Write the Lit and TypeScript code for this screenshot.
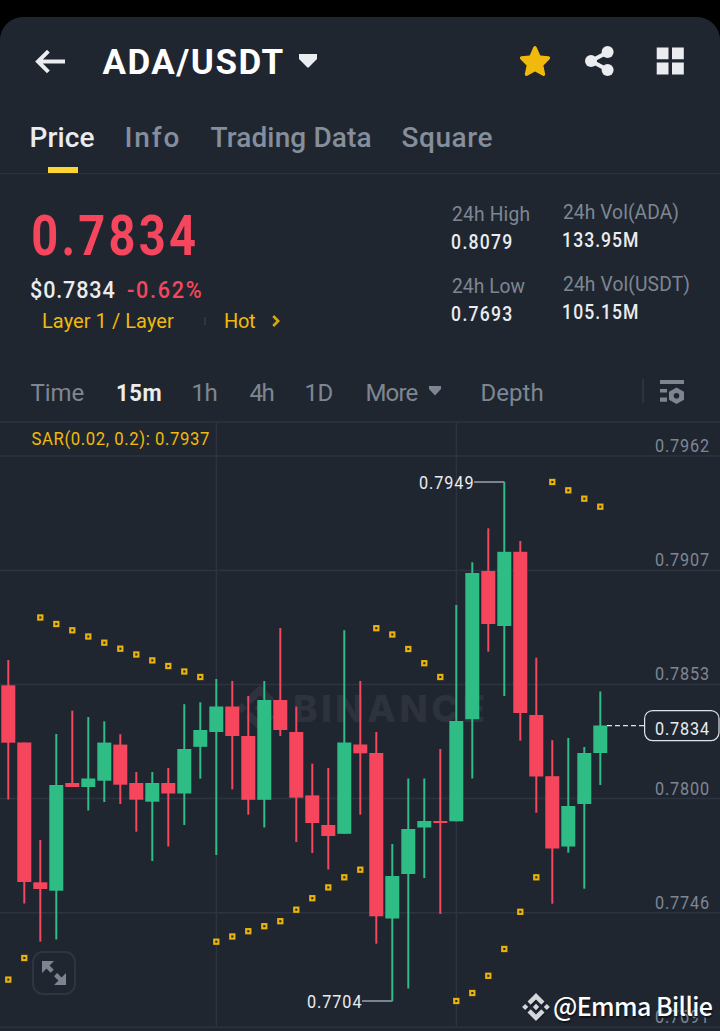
import { LitElement, html, svg, css } from "lit";
import { customElement } from "lit/decorators.js";

type Candle = [up: number, high: number, top: number, bottom: number, low: number];

const STEP = 16;
const FIRST = 8.3;
const cx = (i: number) => FIRST + i * STEP;

const CANDLES: Candle[] = [
  [0, 660, 685.3, 742.7, 799.5], [0, 742.5, 742.5, 882, 903.5], [0, 840, 882.3, 889, 941.7],
  [1, 734, 785, 890.7, 939.5], [0, 710.7, 783, 787, 787], [1, 717, 778.5, 787, 810.5],
  [1, 721.3, 742.6, 780.7, 802], [0, 734.2, 744.6, 784.7, 804], [0, 772, 783, 799.7, 831.7],
  [1, 772, 783, 801.7, 861], [0, 768, 783, 793.5, 846.5], [1, 704.2, 749, 793.5, 825],
  [1, 702.3, 730, 746.8, 778.7], [1, 679, 706.5, 732, 855], [0, 681, 706.5, 736, 789.3],
  [0, 696, 736, 799.8, 814.7], [1, 681, 700, 799.8, 827.5], [0, 628, 700, 730, 736],
  [0, 706.5, 732, 797.7, 842], [0, 763.7, 795.4, 823, 853], [0, 768, 825, 836, 869.5],
  [1, 630.2, 742.5, 833.8, 833.8], [0, 681, 744.5, 753.3, 814.7], [0, 732, 753, 916.3, 943.7],
  [1, 844, 876, 918.5, 1001], [1, 778.5, 829, 874, 988.5], [1, 778.5, 821, 827.5, 878],
  [0, 749, 821, 823, 914], [1, 605, 721, 821.3, 821.3], [1, 562.3, 573, 719.2, 778.5],
  [0, 528.3, 571, 624, 651.7], [1, 482, 551.8, 626, 696], [0, 541, 551.8, 713, 740.7],
  [0, 657.7, 715, 776.5, 812.8], [0, 740.2, 776.2, 848.5, 903.7], [1, 738, 806, 846.5, 852.7],
  [1, 747, 753, 804, 888.7], [1, 691.5, 725.5, 753, 785],
];

const SAR: [start: number, ys: number[]][] = [
  [0, [979.6, 958]],
  [2, [617.5, 624, 630.3, 636.5, 642.7, 648.7, 654.5, 660.4, 666, 671.5, 677]],
  [13, [941.7, 936.5, 931.2, 926.2, 921.2, 909.7, 898.2, 887.4, 877.3, 869.7]],
  [23, [628.2, 634.5, 649, 663.2, 677]],
  [28, [1001, 993, 975.8, 949, 911.8, 877.3]],
  [34, [482, 490.3, 498.7, 506.7]],
];

const AXIS: [string, number][] = [
  ["0.7962", 452], ["0.7907", 566], ["0.7853", 680.3],
  ["0.7800", 794.7], ["0.7746", 909], ["0.7691", 1023.3],
];

const pen = document.createElement("canvas").getContext("2d")!;

// A label whose box hugs its glyphs horizontally and is tracked to the given width.
// A squeeze below 1 condenses the glyphs and leaves more room between them.
const label = (text: string, width: number, size: number, weight: number, cls = "", squeeze = 1) => {
  pen.font = `${weight} ${size}px Roboto`;
  const m = pen.measureText(text);
  const ink = m.actualBoundingBoxLeft + m.actualBoundingBoxRight;
  const full = width / squeeze;
  const tracking = (full - ink) / (text.length - 1);
  return html`<span
    class="label ${cls}"
    style="width:${full}px;margin-right:${width - full}px;transform:${squeeze === 1 ? "none" : `scaleX(${squeeze})`};font-size:${size}px;font-weight:${weight};letter-spacing:${tracking.toFixed(3)}px;text-indent:${m.actualBoundingBoxLeft.toFixed(2)}px"
    >${text}</span
  >`;
};

const figures = (text: string, x: number, y: number, width: number, cls: string, squeeze = 0.9) =>
  svg`<text class=${cls} transform="translate(${x} ${y}) scale(${squeeze} 1)" textLength=${width / squeeze}>${text}</text>`;

@customElement("price-chart")
export class PriceChart extends LitElement {
  static styles = css`
    :host { display: block; }
    svg { display: block; font-family: Roboto, sans-serif; }
    .grid { stroke: #2d333f; stroke-width: 1.5; }
    .frame { stroke: #2a303b; stroke-width: 2; }
    .mark { fill: #2d323d; }
    .mark-text { font: 800 37px Inter, sans-serif; }
    .up { fill: #2ebd85; }
    .down { fill: #f6465d; }
    .sar { fill: #202630; stroke: #e9b30c; stroke-width: 2.1; }
    .yellow { fill: #f0b90b; font-size: 17.8px; }
    .axis { fill: #7f8794; font-size: 18px; }
    .value { fill: #eaecef; font-size: 18px; }
    .leader { stroke: #848e9c; stroke-width: 1.8; }
    .dash { stroke: #dfe2e6; stroke-width: 1.2; stroke-dasharray: 5 3; }
    .tag { fill: #202630; stroke: #dfe2e6; stroke-width: 1.2; }
    .button { fill: #202630; stroke: #2e3541; stroke-width: 2; }
    .glyph { fill: #7c8591; }
    .glyph-line { stroke: #7c8591; stroke-width: 4.4; }
    .author-logo { fill: #d3d6da; }
    .author { fill: #fff; font: 500 25px "Noto Sans CJK SC", sans-serif; text-shadow: 1px 1.5px 1px #10141a; }
    .shade { fill: #10141a; opacity: 0.75; }
  `;

  private logo(x: number, y: number, scale: number, cls: string) {
    return svg`<g class=${cls} transform="translate(${x} ${y}) scale(${scale})">
      <path d="M0-14 8.5-5.5 5.3-2.3 0-7.6-5.3-2.3-8.5-5.5Z"/>
      <path d="M0 14 8.5 5.5 5.3 2.3 0 7.6-5.3 2.3-8.5 5.5Z"/>
      <path d="M0-3.2 3.2 0 0 3.2-3.2 0Z"/>
      <path d="M-10.8-3.1-7.7 0-10.8 3.1-13.9 0Z"/>
      <path d="M10.8-3.1 13.9 0 10.8 3.1 7.7 0Z"/>
    </g>`;
  }

  render() {
    return html`<svg width="720" height="610" viewBox="0 421 720 610">
      <line class="frame" x1="0" x2="720" y1="422" y2="422" />
      ${[456, 570.4, 684.5, 798.6, 912.7].map((y) => svg`<line class="grid" x1="0" x2="720" y1=${y} y2=${y}/>`)}
      <line class="frame" x1="0" x2="720" y1="1027.3" y2="1027.3" />
      ${[216.4, 456.4].map((x) => svg`<line class="grid" x1=${x} x2=${x} y1="423" y2="1027"/>`)}
      ${this.logo(260, 708, 1.68, "mark")}
      <text class="mark mark-text" x="293" y="722" textLength="192">BINANCE</text>
      ${AXIS.map(([t, y]) => figures(t, 655, y, 54, "axis"))}
      ${CANDLES.map(
        ([up, high, top, bottom, low], i) => svg`<g class=${up ? "up" : "down"}>
          <rect x=${cx(i) - 1} y=${high} width="2" height=${low - high}/>
          <rect x=${cx(i) - 7} y=${top} width="14" height=${bottom - top}/>
        </g>`,
      )}
      ${SAR.map(([start, ys]) =>
        ys.map((y, i) => svg`<rect class="sar" x=${cx(start + i) - 2.1} y=${y - 2.1} width="4.2" height="4.2"/>`),
      )}
      ${figures("SAR(0.02, 0.2): 0.7937", 31.5, 445, 178, "yellow", 0.94)}
      ${figures("0.7949", 419, 489, 54.5, "value")}
      <line class="leader" x1="474" x2="504.5" y1="482" y2="482" />
      ${figures("0.7704", 307, 1007.7, 54.5, "value")}
      <line class="leader" x1="362" x2="392.5" y1="1001" y2="1001" />
      <line class="dash" x1="607" x2="644" y1="725.6" y2="725.6" />
      <rect class="tag" x="644.6" y="710.6" width="74.4" height="30" rx="8" />
      ${figures("0.7834", 655, 735, 54, "value")}
      <rect class="button" x="33" y="952" width="42" height="42" rx="10" />
      <path class="glyph" d="M42 961H54L42 973ZM66 985H54L66 973Z" />
      <path class="glyph-line" d="M46 965 52.2 971.2M62 981 55.6 974.6" />
      ${this.logo(537, 1008, 1, "shade")}${this.logo(536, 1007, 1, "author-logo")}
      <text class="author" x="553" y="1016" textLength="160">@Emma Billie</text>
    </svg>`;
  }
}

@customElement("app-root")
export class AppRoot extends LitElement {
  static styles = css`
    :host { display: block; background: #000; padding-top: 17px; height: 1014px; overflow: hidden; font-family: Roboto, sans-serif; color: #eaecef; }
    .panel { background: #202630; border-radius: 23px 23px 0 0; height: 1014px; overflow: hidden; }
    .label { display: block; white-space: nowrap; flex: none; transform-origin: 0 50%; }
    svg { display: block; flex: none; }
    .header { height: 90px; display: flex; align-items: center; padding: 0 36px 0 35px; }
    .header > svg:first-child { margin-bottom: 1px; }
    .title { margin-left: 37.5px; color: #fff; line-height: 42px; padding-top: 2px; }
    .caret { margin: 0 auto 2px 16px; }
    .actions { display: flex; align-items: center; gap: 35px; margin-bottom: 2px; }
    .tabs { height: 66px; display: flex; gap: 32px; padding-left: 31.5px; line-height: 58px; color: #848e9c; border-bottom: 1px solid #2c333e; }
    .tab { display: flex; flex-direction: column; align-items: center; padding-top: 2px; height: 64px; }
    .active { color: #eaecef; }
    .bar { width: 30px; height: 6px; background: #fcd535; }
    .summary { height: 190px; display: flex; align-items: flex-start; }
    .quote { width: 386px; padding: 31.5px 33px 0 33px; }
    .last { line-height: 60px; color: #f6465d; }
    .fiat { display: flex; gap: 12px; line-height: 48px; margin-left: -2px; }
    .red { color: #f6465d; }
    .tags { display: flex; align-items: center; line-height: 15px; margin-left: 10px; color: #f0b90b; }
    .sep { width: 2px; height: 8px; background: #2f3642; margin: 0 19px 0 30px; }
    .chevron { margin-left: 17px; }
    .stats { display: flex; flex-direction: column; gap: 16px; line-height: 28px; padding-top: 26px; width: 111px; }
    .second { padding-top: 24px; }
    .key { color: #7e8693; }
    .toolbar { height: 57px; display: flex; align-items: center; padding: 0 36px 0 30.5px; color: #7e8693; }
    .intervals { display: flex; align-items: center; gap: 33px; flex: 1; }
    .more { display: flex; align-items: center; gap: 11px; margin: 0 8px 0 1px; }
    .more svg { margin-bottom: 3px; }
    .rule { width: 2px; height: 24px; background: #2c333e; margin: 0 16px 3px 0; }
    .toolbar > svg { margin-bottom: 2px; }
  `;

  render() {
    return html`<div class="panel">
      <div class="header">
        <svg width="30" height="24" viewBox="0 0 30 24" fill="none" stroke="#eaecef" stroke-width="4">
          <path d="M2.5 11.5H30M13.4 1.2 3 11.5 13.4 21.8" />
        </svg>
        ${label("ADA/USDT", 180, 35, 700, "title")}
        <svg class="caret" width="18" height="14" viewBox="0 0 18 14" fill="#eaecef"><path d="M0 0H18V5L9.8 13.3Q9 14 8.2 13.3L0 5Z" /></svg>
        <div class="actions">
          <svg width="30" height="30" viewBox="0 0 30 30" fill="#f0b90b">
            <path d="M13.4 1Q15 -1 16.5 1L20.3 9.5 28.8 10.3Q31 11.2 29.6 13.2L23.4 19.6 25.2 28.2Q25 30.6 22.8 29.8L15 25.6 7.2 29.8Q5 30.6 4.8 28.2L6.6 19.6.4 13.2Q-1 11.2 1.2 10.3L9.7 9.5Z" />
          </svg>
          <svg width="30" height="30" viewBox="0 0 30 30" fill="#eaecef">
            <path d="M6 15 23 6M6 15 23 24" stroke="#eaecef" stroke-width="4.2" />
            <circle cx="6" cy="15" r="6" /><circle cx="22.6" cy="6" r="6" /><circle cx="22.6" cy="24" r="6" />
          </svg>
          <svg width="34" height="28" viewBox="-6 0 34 28" fill="#eaecef">
            <path d="M.7.5H12.5V12.3H.7ZM16 .5H27.8V12.3H16ZM.7 15.6H12.5V27.4H.7ZM16 15.6H27.8V27.4H16Z" />
          </svg>
        </div>
      </div>
      <div class="tabs">
        <div class="tab active">${label("Price", 63, 28, 500)}<div class="bar"></div></div>
        <div class="tab">${label("Info", 52, 28, 500)}</div>
        <div class="tab">${label("Trading Data", 160, 28, 500)}</div>
        <div class="tab">${label("Square", 90, 28, 500)}</div>
      </div>
      <div class="summary">
        <div class="quote">
          ${label("0.7834", 162, 56, 700, "last", 0.84)}
          <div class="fiat">${label("$0.7834", 84, 24, 500, "", 0.9)}${label("-0.62%", 74, 24, 500, "red", 0.9)}</div>
          <div class="tags">
            ${label("Layer 1 / Layer", 131, 20, 400)}
            <div class="sep"></div>
            ${label("Hot", 30, 20, 400)}
            <svg class="chevron" width="8" height="12" viewBox="0 0 8 12" fill="none" stroke="#d9a70d" stroke-width="2.6"><path d="M1.2 1 6.2 6 1.2 11" /></svg>
          </div>
        </div>
        <div class="stats">
          <div>${label("24h High", 77, 20, 400, "key", 0.96)}${label("0.8079", 60, 20, 500, "", 0.88)}</div>
          <div>${label("24h Low", 73, 20, 400, "key", 0.96)}${label("0.7693", 60, 20, 500, "", 0.88)}</div>
        </div>
        <div class="stats second">
          <div>${label("24h Vol(ADA)", 115, 20, 400, "key", 0.96)}${label("133.95M", 75, 20, 500, "", 0.88)}</div>
          <div>${label("24h Vol(USDT)", 126, 20, 400, "key", 0.96)}${label("105.15M", 75, 20, 500, "", 0.88)}</div>
        </div>
      </div>
      <div class="toolbar">
        <div class="intervals">
          ${label("Time", 53, 24, 400)}${label("15m", 44, 24, 700, "active", 0.92)}${label("1h", 23, 24, 400)}
          ${label("4h", 24, 24, 400)}${label("1D", 26, 24, 400)}
          <div class="more">
            ${label("More", 51, 24, 400)}
            <svg width="12" height="10" viewBox="0 0 12 10" fill="#7e8693"><path d="M0 0H12V3L6 9.4 0 3Z" /></svg>
          </div>
          ${label("Depth", 61, 24, 400)}
        </div>
        <div class="rule"></div>
        <svg width="24" height="24" viewBox="0 0 24 24" fill="#7c8591">
          <path d="M0 0H24V4H0ZM0 9H7V12.4H0ZM0 17.4H7V21.8H0Z" />
          <path fill-rule="evenodd" d="M16.5 7.6 24 11.8V19.8L16.5 24 9 19.8V11.8ZM16.5 13A2.8 2.8 0 1 0 16.5 18.6 2.8 2.8 0 1 0 16.5 13Z" />
        </svg>
      </div>
      <price-chart></price-chart>
    </div>`;
  }
}
